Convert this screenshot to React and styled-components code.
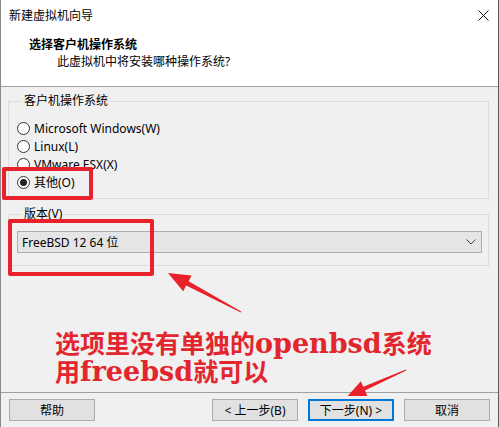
import React from "react";
import styled, { createGlobalStyle } from "styled-components";

const GlobalStyle = createGlobalStyle`
  body {
    margin: 0;
    background: #fff;
    font-family: "Noto Sans", "Noto Sans CJK SC", sans-serif;
    font-size: 12px;
    color: #000;
  }
`;

const Window = styled.div`
  position: relative;
  width: 499px;
  height: 427px;
  box-sizing: border-box;
  border-left: 1px solid #8a8a8a;
  border-right: 1px solid #5a5a5a;
  display: flex;
  flex-direction: column;
  overflow: hidden;
`;

const TitleBar = styled.div`
  height: 30px;
  display: flex;
  align-items: center;
  justify-content: space-between;
  padding: 0 9px 0 8px;
  background: #fff;
`;

const Header = styled.div`
  height: 56px;
  background: #fff;
  border-bottom: 1px solid #a0a0a0;
  padding-left: 28px;
  display: flex;
  flex-direction: column;
`;

const HeaderTitle = styled.div`
  font-weight: 700;
  line-height: 16px;
  margin-top: 7px;
`;

const HeaderSub = styled.div`
  line-height: 16px;
  margin-top: 1px;
  padding-left: 28px;
`;

const Body = styled.div`
  flex: 1;
  background: #f0f0f0;
  padding: 6px 9px 0 7px;
  display: flex;
  flex-direction: column;
`;

const Group = styled.fieldset`
  margin: ${p => p.$top}px 0 0 0;
  padding: ${p => p.$pt}px 6px ${p => p.$pb}px 8px;
  border: 1px solid #dcdcdc;
  min-width: 0;
`;

const Legend = styled.legend`
  padding: 0 2px;
  margin-left: 5px;
  line-height: 16px;
`;

const RadioRow = styled.div`
  height: 18px;
  display: flex;
  align-items: center;
  gap: 4px;
`;

const RadioCircle = styled.span`
  width: 11px;
  height: 11px;
  border: 1px solid #333;
  border-radius: 50%;
  background: #fff;
  display: flex;
  align-items: center;
  justify-content: center;
  &::after {
    content: "";
    width: 7px;
    height: 7px;
    border-radius: 50%;
    background: ${p => (p.$checked ? "#222" : "transparent")};
  }
`;

const Combo = styled.div`
  height: 22px;
  box-sizing: border-box;
  border: 1px solid #adadad;
  background: #e5e5e5;
  display: flex;
  align-items: center;
  justify-content: space-between;
  padding: 0 5px 0 4px;
`;

const Note = styled.div`
  margin-top: 62px;
  padding-left: 47px;
  color: #e3262e;
  font-family: "Noto Sans CJK SC", sans-serif;
  font-weight: 700;
  font-size: 25px;
`;

const NoteLine = styled.div`
  height: 28px;
  line-height: 28px;
  white-space: nowrap;
`;

const Latin = styled.span`
  font-family: "DejaVu Serif", serif;
  font-size: 27px;
  line-height: 1;
`;

const Footer = styled.div`
  height: 35px;
  box-sizing: border-box;
  border-top: 1px solid #a0a0a0;
  background: #f0f0f0;
  display: flex;
  align-items: center;
  padding: 0 8px;
  gap: 10px;
`;

const Button = styled.div`
  width: 86px;
  height: 22px;
  box-sizing: border-box;
  background: #e1e1e1;
  border: ${p => (p.$focus ? "2px solid #0078d7" : "1px solid #adadad")};
  display: flex;
  align-items: center;
  justify-content: center;
  margin-left: ${p => (p.$push ? "auto" : "0")};
`;

const RedBox = styled.div`
  position: absolute;
  box-sizing: border-box;
  border: 4px solid #e8212b;
  border-radius: 2px;
  left: ${p => p.$x}px;
  top: ${p => p.$y}px;
  width: ${p => p.$w}px;
  height: ${p => p.$h}px;
`;

const Overlay = styled.svg`
  position: absolute;
  left: 0;
  top: 0;
  pointer-events: none;
`;

const radios = [
  { label: "Microsoft Windows(W)" },
  { label: "Linux(L)" },
  { label: "VMware ESX(X)" },
  { label: "其他(O)", checked: true },
];

export default function App() {
  return (
    <>
      <GlobalStyle />
      <Window>
        <TitleBar>
          <span>新建虚拟机向导</span>
          <svg width="11" height="11" viewBox="0 0 11 11">
            <path d="M0.5 0.5L10.5 10.5M10.5 0.5L0.5 10.5" stroke="#111" strokeWidth="1" />
          </svg>
        </TitleBar>
        <Header>
          <HeaderTitle>选择客户机操作系统</HeaderTitle>
          <HeaderSub>此虚拟机中将安装哪种操作系统?</HeaderSub>
        </Header>
        <Body>
          <Group $top={0} $pt={10} $pb={7}>
            <Legend>客户机操作系统</Legend>
            {radios.map(r => (
              <RadioRow key={r.label}>
                <RadioCircle $checked={r.checked} />
                <span>{r.label}</span>
              </RadioRow>
            ))}
          </Group>
          <Group $top={7} $pt={9} $pb={12}>
            <Legend>版本(V)</Legend>
            <Combo>
              <span>FreeBSD 12 64 位</span>
              <svg width="10" height="6" viewBox="0 0 10 6">
                <path d="M0.5 0.5L5 5L9.5 0.5" fill="none" stroke="#444" strokeWidth="1" />
              </svg>
            </Combo>
          </Group>
          <Note>
            <NoteLine>选项里没有单独的<Latin>openbsd</Latin>系统</NoteLine>
            <NoteLine>用<Latin>freebsd</Latin>就可以</NoteLine>
          </Note>
        </Body>
        <Footer>
          <Button>帮助</Button>
          <Button $push>&lt; 上一步(B)</Button>
          <Button $focus>下一步(N) &gt;</Button>
          <Button>取消</Button>
        </Footer>
        <RedBox $x={1} $y={167} $w={91} $h={33} />
        <RedBox $x={7} $y={219} $w={146} $h={57} />
        <Overlay width="499" height="427" viewBox="0 0 499 427">
          <polygon
            fill="#e8212b"
            points="167,273 190.6,275.5 187.6,281.2 240.2,311.6 239.8,312.4 185.2,285.6 182.2,291.3"
          />
          <polygon
            fill="#e8212b"
            points="346.7,396 359.8,381.3 362.3,386.8 404.8,369.5 405.2,370.5 363.9,390.4 366.4,395.9"
          />
        </Overlay>
      </Window>
    </>
  );
}
